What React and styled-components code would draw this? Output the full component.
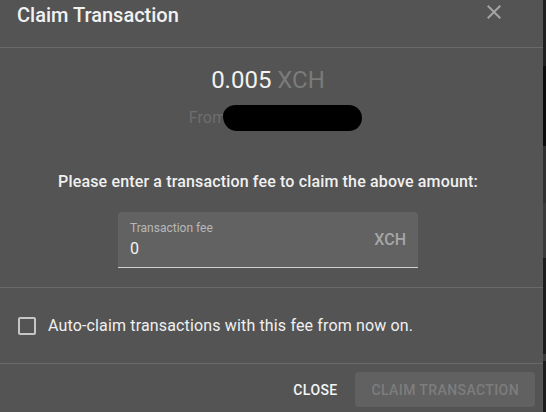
import React from "react";
import styled, { createGlobalStyle } from "styled-components";

const Global = createGlobalStyle`
  html, body { margin: 0; padding: 0; background: #1c1c1c; }
  body { font-family: Roboto, "Liberation Sans", sans-serif; }
  * { box-sizing: border-box; }
`;

const Page = styled.div`
  display: flex;
  width: 546px;
  height: 412px;
  overflow: hidden;
`;

const Dialog = styled.div`
  width: 543px;
  height: 412px;
  background: #545454;
  display: flex;
  flex-direction: column;
  color: #fff;
`;

const Strip = styled.div`
  width: 3px;
  display: flex;
  flex-direction: column;
`;

const StripPart = styled.div`
  height: ${(p) => p.$h}px;
  background: ${(p) => p.$c};
`;

const Header = styled.div`
  height: 48px;
  border-bottom: 1px solid #696969;
  display: flex;
  justify-content: space-between;
  align-items: flex-start;
  padding: 0 37px 0 17px;
`;

const Title = styled.h2`
  margin: 0;
  font-size: 20px;
  font-weight: 500;
  line-height: 30px;
  color: #f2f2f2;
`;

const CloseIcon = styled.svg`
  width: 24px;
  height: 24px;
  fill: #a3a3a3;
`;

const Content = styled.div`
  display: flex;
  flex-direction: column;
  align-items: center;
  padding: 18px 31px 19px 24px;
  border-bottom: 1px solid #696969;
`;

const Amount = styled.div`
  font-size: 24px;
  line-height: 28px;
  color: #f2f2f2;
`;

const Unit = styled.span`
  color: #7b7b7b;
`;

const FromRow = styled.div`
  margin-top: 14px;
  display: flex;
  align-items: center;
  padding-left: 15px;
  height: 20px;
`;

const FromText = styled.span`
  font-size: 16px;
  line-height: 20px;
  letter-spacing: 0.15px;
  color: #6e6e6e;
`;

const Redaction = styled.span`
  display: block;
  width: 139px;
  height: 26px;
  margin-left: -3px;
  background: #000;
  border-radius: 13px 13px 13px 13px / 11px 13px 13px 15px;
`;

const Prompt = styled.p`
  margin: 42px 0 0;
  font-size: 16px;
  font-weight: 500;
  line-height: 24px;
  letter-spacing: 0.15px;
  color: #f0f0f0;
`;

const Field = styled.div`
  margin-top: 18px;
  width: 300px;
  height: 56px;
  background: #626262;
  border-radius: 4px 4px 0 0;
  border-bottom: 1px solid #d0d0d0;
  display: flex;
  align-items: center;
  padding: 0 12px;
`;

const FieldMain = styled.div`
  flex: 1;
  display: flex;
  flex-direction: column;
  padding-top: 9px;
  align-self: stretch;
`;

const FieldLabel = styled.span`
  font-size: 12px;
  line-height: 14px;
  color: #b8b8b8;
`;

const FieldValue = styled.span`
  margin-top: 4px;
  font-size: 16px;
  line-height: 19px;
  color: #f2f2f2;
`;

const FieldAdornment = styled.span`
  font-size: 16px;
  font-weight: 500;
  color: #a6a6a6;
  margin-top: -1px;
`;

const CheckRow = styled.label`
  height: 76px;
  border-bottom: 1px solid #696969;
  display: flex;
  align-items: center;
  gap: 12px;
  padding: 1px 18px 0;
`;

const Box = styled.span`
  width: 18px;
  height: 18px;
  border: 2px solid #c6c6c6;
  border-radius: 2px;
  flex: none;
`;

const CheckText = styled.span`
  font-size: 16px;
  line-height: 24px;
  letter-spacing: 0.15px;
  color: #f0f0f0;
`;

const Footer = styled.div`
  display: flex;
  justify-content: flex-end;
  align-items: flex-start;
  gap: 8px;
  padding: 8px 8px 0;
`;

const Button = styled.button`
  font-family: Roboto, "Liberation Sans", sans-serif;
  font-size: 14px;
  font-weight: 500;
  letter-spacing: 0.4px;
  text-transform: uppercase;
  border: none;
  border-radius: 4px;
  height: 35px;
  min-width: 64px;
  padding: 0 ${(p) => (p.$contained ? 16 : 8)}px;
  background: ${(p) => (p.$contained ? "#616161" : "transparent")};
  color: ${(p) => (p.$contained ? "#7d7d7d" : "#f5f5f5")};
  cursor: pointer;
`;

const stripe = [
  [66, "#1f1f1f"],
  [80, "#0c0c0c"],
  [57, "#303030"],
  [55, "#3a3a3a"],
  [96, "#1c1c1c"],
  [7, "#3a3a3a"],
  [51, "#1c1c1c"],
];

export default function App() {
  return (
    <>
      <Global />
      <Page>
        <Dialog>
          <Header>
            <Title>Claim Transaction</Title>
            <CloseIcon viewBox="0 0 24 24">
              <path d="M19 6.41 17.59 5 12 10.59 6.41 5 5 6.41 10.59 12 5 17.59 6.41 19 12 13.41 17.59 19 19 17.59 13.41 12z" />
            </CloseIcon>
          </Header>
          <Content>
            <Amount>
              0.005 <Unit>XCH</Unit>
            </Amount>
            <FromRow>
              <FromText>From</FromText>
              <Redaction />
            </FromRow>
            <Prompt>Please enter a transaction fee to claim the above amount:</Prompt>
            <Field>
              <FieldMain>
                <FieldLabel>Transaction fee</FieldLabel>
                <FieldValue>0</FieldValue>
              </FieldMain>
              <FieldAdornment>XCH</FieldAdornment>
            </Field>
          </Content>
          <CheckRow>
            <Box />
            <CheckText>Auto-claim transactions with this fee from now on.</CheckText>
          </CheckRow>
          <Footer>
            <Button>Close</Button>
            <Button $contained disabled>
              Claim Transaction
            </Button>
          </Footer>
        </Dialog>
        <Strip>
          {stripe.map(([h, c], i) => (
            <StripPart key={i} $h={h} $c={c} />
          ))}
        </Strip>
      </Page>
    </>
  );
}
